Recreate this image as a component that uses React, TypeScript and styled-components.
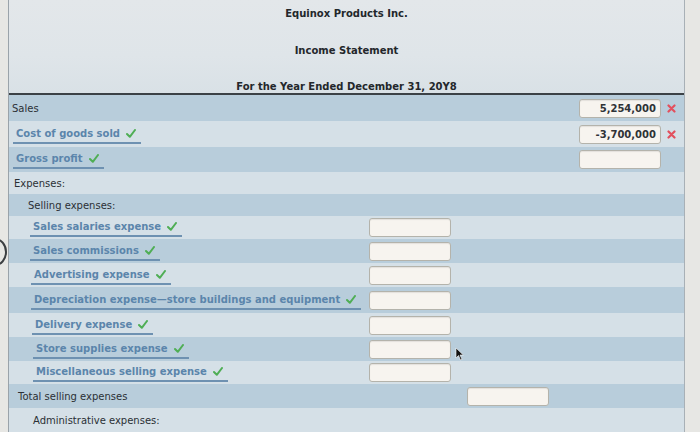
import React from 'react';
import styled, {createGlobalStyle} from 'styled-components';

const GlobalStyle = createGlobalStyle`
  html, body {
    margin: 0;
    padding: 0;
    background: #e7e7e4;
  }
  body {
    font-family: 'DejaVu Sans', Verdana, sans-serif;
    font-size: 10px;
    color: #2b3035;
  }
`;

const Page = styled.div`
  position: relative;
  width: 700px;
  height: 432px;
  overflow: hidden;
  padding: 0 15px 0 8px;
  box-sizing: border-box;
`;

const Sheet = styled.div`
  border-left: 1px solid #9aa3aa;
  border-right: 1px solid #a8b0b6;
`;

const Header = styled.div`
  height: 95px;
  display: flex;
  flex-direction: column;
  align-items: center;
  justify-content: space-between;
  padding: 8px 0 0;
  box-sizing: border-box;
  background: linear-gradient(180deg, #e3e7ea 0%, #dfe5e9 60%, #d9e1e6 100%);
  border-bottom: 2px solid #3b4146;
`;

const Title = styled.div`
  font-weight: bold;
  font-size: 10px;
  color: #23272b;
  line-height: 12px;
`;

const Row = styled.div<{$dark: boolean; $h: number}>`
  display: grid;
  grid-template-columns: 360px 98px 112px 82px 1fr;
  align-items: center;
  height: ${p => p.$h}px;
  background: ${p => (p.$dark ? '#b8cddb' : '#d5e0e7')};
`;

const LabelCell = styled.div<{$indent: number}>`
  padding-left: ${p => p.$indent}px;
  display: flex;
  align-items: center;
`;

const PlainLabel = styled.span`
  color: #2b3035;
  font-size: 10px;
`;

const Answer = styled.span`
  display: inline-flex;
  align-items: center;
  gap: 6px;
  padding: 3px 5px 3px 3px;
  border-bottom: 2px solid #6e91b1;
  font-weight: bold;
  font-size: 10px;
  color: #5b85ab;
`;

const Cell = styled.div`
  display: flex;
  align-items: center;
`;

const Box = styled.div`
  width: 82px;
  height: 19px;
  box-sizing: border-box;
  background: #f7f4ef;
  border: 1px solid #b4b3ab;
  border-radius: 3px;
  box-shadow: inset 0 1px 1px rgba(0, 0, 0, 0.08);
  display: flex;
  align-items: center;
  justify-content: flex-end;
  padding-right: 4px;
  font-weight: bold;
  font-size: 10px;
  color: #2f3236;
`;

const MarkCell = styled.div`
  display: flex;
  align-items: center;
  padding-left: 6px;
`;

const Cursor = styled.svg`
  position: absolute;
  left: 455px;
  top: 347px;
`;

const NavCircle = styled.div`
  position: absolute;
  left: -17px;
  top: 238px;
  width: 20px;
  height: 24px;
  border: 2px solid #3c3f42;
  border-radius: 50%;
`;

const Check = () => (
  <svg width="10" height="9" viewBox="0 0 10 9">
    <path
      d="M1 5 L3.8 7.8 L9 1"
      fill="none"
      stroke="#4fae55"
      strokeWidth="2"
      strokeLinecap="round"
      strokeLinejoin="round"
    />
  </svg>
);

const Cross = () => (
  <svg width="9" height="9" viewBox="0 0 9 9">
    <path
      d="M1.5 1.5 L7.5 7.5 M7.5 1.5 L1.5 7.5"
      stroke="#e2505e"
      strokeWidth="2.2"
      strokeLinecap="round"
    />
  </svg>
);

type Line = {
  label: string;
  kind: 'plain' | 'answer';
  indent: number;
  h: number;
  col?: 1 | 2 | 3;
  value?: string;
  wrong?: boolean;
};

const lines: Line[] = [
  {label: 'Sales', kind: 'plain', indent: 3, h: 26, col: 3, value: '5,254,000', wrong: true},
  {label: 'Cost of goods sold', kind: 'answer', indent: 4, h: 26, col: 3, value: '-3,700,000', wrong: true},
  {label: 'Gross profit', kind: 'answer', indent: 4, h: 25, col: 3, value: ''},
  {label: 'Expenses:', kind: 'plain', indent: 5, h: 22},
  {label: 'Selling expenses:', kind: 'plain', indent: 19, h: 22},
  {label: 'Sales salaries expense', kind: 'answer', indent: 21, h: 23, col: 1, value: ''},
  {label: 'Sales commissions', kind: 'answer', indent: 21, h: 24, col: 1, value: ''},
  {label: 'Advertising expense', kind: 'answer', indent: 22, h: 24, col: 1, value: ''},
  {label: 'Depreciation expense\u2014store buildings and equipment', kind: 'answer', indent: 22, h: 26, col: 1, value: ''},
  {label: 'Delivery expense', kind: 'answer', indent: 23, h: 24, col: 1, value: ''},
  {label: 'Store supplies expense', kind: 'answer', indent: 24, h: 24, col: 1, value: ''},
  {label: 'Miscellaneous selling expense', kind: 'answer', indent: 24, h: 23, col: 1, value: ''},
  {label: 'Total selling expenses', kind: 'plain', indent: 9, h: 24, col: 2, value: ''},
  {label: 'Administrative expenses:', kind: 'plain', indent: 24, h: 24},
];

const StatementRow: React.FC<{line: Line; dark: boolean}> = ({line, dark}) => {
  const cols = [1, 2, 3].map(c =>
    line.col === c ? (
      <Cell key={c}>
        <Box>{line.value}</Box>
      </Cell>
    ) : (
      <Cell key={c} />
    )
  );
  return (
    <Row $dark={dark} $h={line.h}>
      <LabelCell $indent={line.indent}>
        {line.kind === 'answer' ? (
          <Answer>
            {line.label}
            <Check />
          </Answer>
        ) : (
          <PlainLabel>{line.label}</PlainLabel>
        )}
      </LabelCell>
      {cols}
      <MarkCell>{line.wrong && <Cross />}</MarkCell>
    </Row>
  );
};

export default function App() {
  return (
    <Page>
      <GlobalStyle />
      <Sheet>
        <Header>
          <Title>Equinox Products Inc.</Title>
          <Title>Income Statement</Title>
          <Title>For the Year Ended December 31, 20Y8</Title>
        </Header>
        {lines.map((line, i) => (
          <StatementRow key={line.label} line={line} dark={i % 2 === 0} />
        ))}
      </Sheet>
      <NavCircle />
      <Cursor width="9" height="14" viewBox="0 0 9 14">
        <path d="M1 1 L1 11 L3.5 8.5 L5.5 13 L7 12.3 L5 8 L8.3 8 Z" fill="#111" stroke="#fff" strokeWidth="0.6" />
      </Cursor>
    </Page>
  );
}
